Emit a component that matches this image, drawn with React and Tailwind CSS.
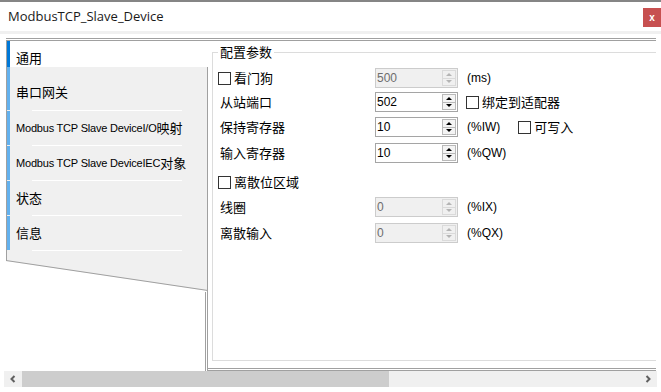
import React from "react";

const cjk = { fontFamily: '"Noto Sans CJK SC", "Liberation Sans", sans-serif' };
const latin = { fontFamily: '"Liberation Sans", "Noto Sans CJK SC", sans-serif' };

function Spinner({ disabled }) {
  const c = disabled ? "#b4b4b4" : "#000000";
  return (
    <div
      className={`w-[14px] my-[1px] mr-[1px] flex flex-col border ${
        disabled ? "border-[#dadada] bg-[#f0f0f0]" : "border-[#b9b9b9] bg-[#f4f4f4]"
      }`}
    >
      <div className="flex-1 flex items-center justify-center">
        <svg width="6" height="3" viewBox="0 0 6 3">
          <polygon points="0,3 6,3 3,0" fill={c} />
        </svg>
      </div>
      <div className={`h-[1px] ${disabled ? "bg-[#dadada]" : "bg-[#b9b9b9]"}`} />
      <div className="flex-1 flex items-center justify-center">
        <svg width="6" height="3" viewBox="0 0 6 3">
          <polygon points="0,0 6,0 3,3" fill={c} />
        </svg>
      </div>
    </div>
  );
}

function SpinBox({ value, disabled }) {
  return (
    <div
      className={`w-[83px] h-[20px] flex border ${
        disabled ? "bg-[#f0f0f0] border-[#cccccc]" : "bg-white border-[#a5a5a5]"
      }`}
    >
      <div
        className={`flex-1 flex items-center pl-[1px] text-[12px] ${
          disabled ? "text-[#6d6d6d]" : "text-black"
        }`}
        style={latin}
      >
        {value}
      </div>
      <Spinner disabled={disabled} />
    </div>
  );
}

function Check({ label }) {
  return (
    <div className="flex items-center">
      <div className="w-[13px] h-[13px] border border-[#333333] bg-white" />
      <span className="ml-[3px] text-[13px] leading-[18px]" style={cjk}>
        {label}
      </span>
    </div>
  );
}

function Unit({ children }) {
  return (
    <span className="ml-[9px] text-[12px]" style={latin}>
      {children}
    </span>
  );
}

function Row({ label, check, value, disabled, children, className = "" }) {
  return (
    <div className={`flex items-center h-[20px] ${className}`}>
      {check ? (
        <div className="w-[157px] -ml-[2px]">
          <Check label={label} />
        </div>
      ) : (
        <div className="w-[155px] text-[13px]" style={cjk}>
          {label}
        </div>
      )}
      <SpinBox value={value} disabled={disabled} />
      {children}
    </div>
  );
}

function Tab({ label, small, h, extra = "" }) {
  return (
    <div className={`flex ${h}`}>
      <div className="w-[3px] bg-[#63b1ee]" />
      <div
        className={`flex items-center pl-[6px] ${extra} ${
          small ? "text-[11px] tracking-[-0.2px]" : "text-[13px]"
        }`}
        style={small ? latin : cjk}
      >
        {label}
      </div>
    </div>
  );
}

function Sep() {
  return (
    <div className="flex h-[1px]">
      <div className="w-[3px]" />
      <div className="ml-[22px] w-[150px] bg-white" />
    </div>
  );
}

export default function App() {
  return (
    <div className="w-[661px] h-[392px] bg-white overflow-hidden flex flex-col text-black">
      <div className="h-[2px] bg-[#858585]" />

      {/* title bar */}
      <div className="h-[29px] flex justify-between">
        <span
          className="pl-[8px] pt-[5px] text-[13px] leading-[18px] text-[#1a1a1a]"
          style={{ fontFamily: '"Open Sans", "Liberation Sans", sans-serif' }}
        >
          ModbusTCP_Slave_Device
        </span>
        <div
          className="mt-[6px] w-[18px] h-[19px] bg-[#c75050] text-white text-[10px] font-bold flex items-center justify-center"
          style={latin}
        >
          x
        </div>
      </div>
      <div className="h-[3px] bg-[#f0f0f0]" />
      <div className="h-[4px]" />

      {/* tab control */}
      <div className="ml-[6px] w-[650px] h-[333px] border-t-[3px] border-double border-[#a0a0a0] flex">
        {/* tab strip */}
        <div className="w-[202px] flex flex-col">
          <div className="border-l border-[#a0a0a0]">
            <div className="flex h-[26px] bg-white">
              <div className="w-[3px] bg-[#0078d7]" />
              <div className="flex items-center pl-[6px] pt-[8px] text-[13px]" style={cjk}>
                通用
              </div>
            </div>
            <div className="bg-[#f0f0f0] border-r border-[#a0a0a0]">
              <Tab label="串口网关" h="h-[43px]" extra="pt-[6px]" />
              <Sep />
              <Tab
                label={
                  <>
                    Modbus TCP Slave DeviceI/O
                    <span style={cjk} className="text-[13px] tracking-normal">映射</span>
                  </>
                }
                small
                h="h-[34px]"
              />
              <Sep />
              <Tab
                label={
                  <>
                    Modbus TCP Slave DeviceIEC
                    <span style={cjk} className="text-[13px] tracking-normal">对象</span>
                  </>
                }
                small
                h="h-[34px]"
              />
              <Sep />
              <Tab label="状态" h="h-[34px]" />
              <Sep />
              <Tab label="信息" h="h-[34px]" />
              <Sep />
            </div>
          </div>
          <svg width="202" height="41" viewBox="0 0 202 41" className="block">
            <polygon points="0,0 202,0 202,40 0,10" fill="#f0f0f0" />
            <line x1="0.5" y1="0" x2="0.5" y2="10" stroke="#a0a0a0" />
            <line x1="201.5" y1="0" x2="201.5" y2="41" stroke="#a0a0a0" />
            <line x1="0" y1="9.5" x2="202" y2="39.5" stroke="#a0a0a0" />
          </svg>
          <div className="flex-1 border-r-[3px] border-double border-[#a0a0a0]" />
        </div>

        {/* content */}
        <div className="flex-1 border-b-[3px] border-double border-[#a0a0a0] pl-[4px] pt-[2px] pb-[7px] flex flex-col">
          <fieldset className="flex-1 border border-r-0 border-[#dcdcdc] pl-[7px] pt-[7px]">
            <legend className="-ml-[2px] px-[2px] text-[13px] leading-[18px]" style={cjk}>
              配置参数
            </legend>
            <div className="flex flex-col">
              <Row label="看门狗" check value="500" disabled>
                <Unit>(ms)</Unit>
              </Row>
              <Row label="从站端口" value="502" className="mt-[4px]">
                <div className="ml-[8px]">
                  <Check label="绑定到适配器" />
                </div>
              </Row>
              <Row label="保持寄存器" value="10" className="mt-[5px]">
                <Unit>(%IW)</Unit>
                <div className="ml-[18px]">
                  <Check label="可写入" />
                </div>
              </Row>
              <Row label="输入寄存器" value="10" className="mt-[6px]">
                <Unit>(%QW)</Unit>
              </Row>
              <div className="h-[20px] mt-[9px] -ml-[2px] flex items-center">
                <Check label="离散位区域" />
              </div>
              <Row label="线圈" value="0" disabled className="mt-[5px]">
                <Unit>(%IX)</Unit>
              </Row>
              <Row label="离散输入" value="0" disabled className="mt-[6px]">
                <Unit>(%QX)</Unit>
              </Row>
            </div>
          </fieldset>
        </div>
      </div>

      {/* horizontal scrollbar */}
      <div className="ml-[4px] w-[653px] h-[16px] bg-[#f0f0f0] flex">
        <div className="w-[18px] flex items-center justify-center">
          <svg width="6" height="8" viewBox="0 0 6 8">
            <polyline points="4.5,1 1.5,4 4.5,7" fill="none" stroke="#606060" strokeWidth="2" />
          </svg>
        </div>
        <div className="w-[367px] bg-[#cdcdcd]" />
        <div className="flex-1" />
        <div className="w-[18px] flex items-center justify-center">
          <svg width="6" height="8" viewBox="0 0 6 8">
            <polyline points="1.5,1 4.5,4 1.5,7" fill="none" stroke="#606060" strokeWidth="2" />
          </svg>
        </div>
      </div>
    </div>
  );
}
